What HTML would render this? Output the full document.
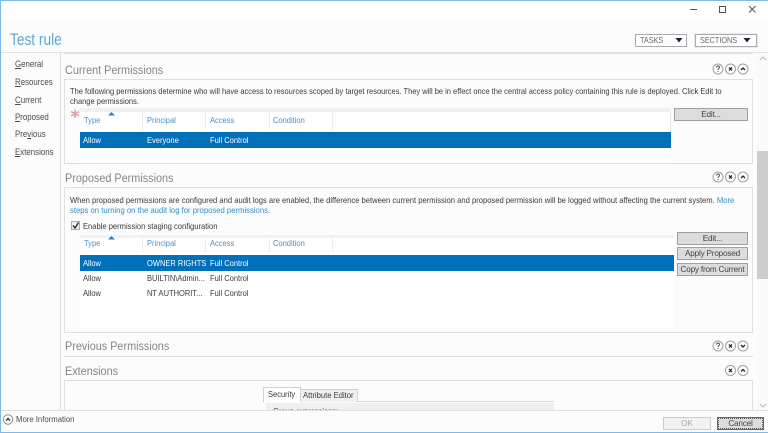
<!DOCTYPE html>
<html><head><meta charset="utf-8"><style>
html,body{margin:0;padding:0;width:768px;height:433px;overflow:hidden;background:#fcfcfc}
body{position:relative;font-family:"Liberation Sans",sans-serif;font-size:8.6px;color:#3a3a3a}
#w{position:absolute;left:0;top:0;width:768px;height:433px;overflow:hidden;filter:blur(.3px)}
.a,.th,.n,.h{transform:scaleX(.875);transform-origin:0 50%}
.a{position:absolute;white-space:nowrap;line-height:12px}
.b{position:absolute;box-sizing:border-box}
.h{position:absolute;white-space:nowrap;font-size:12.4px;color:#858585;line-height:16px;left:65px}
.n{position:absolute;left:14.500px;font-size:9px;color:#4a4a4a;line-height:12px}
.n u{text-decoration-thickness:1px}
.th{position:absolute;color:#4a90c8;line-height:12px;font-size:8.6px;white-space:nowrap}
.w{color:#fff}
.btn{position:absolute;box-sizing:border-box;background:#dcdcdc;border:1px solid #a0a0a0;text-align:center;font-size:8.2px;letter-spacing:-.2px;color:#444;line-height:11px;white-space:nowrap}
.sep{position:absolute;width:1px;background:#ececec}
svg{position:absolute;overflow:visible}
</style></head><body><div id="w">
<div class="b" style="left:0;top:0;width:768px;height:19px;background:#fff"></div>

<svg style="left:690px;top:0" width="78" height="19" fill="none" stroke="#555" stroke-width="1">
<path d="M0 9.500h7"/><rect x="29.500" y="6.500" width="6" height="6"/><path d="M59 6l6.500 6.500M65.500 6l-6.500 6.500"/></svg>

<div class="a" style="left:10px;top:29px;font-size:16.500px;line-height:22px;color:#62a6cf;transform:scaleX(.83)">Test rule</div>
<div class="b" style="left:635px;top:34px;width:52px;height:13px;background:#fff;border:1px solid #aaa"></div>
<div class="a" style="left:640px;top:35px;font-size:8.300px;line-height:11px;color:#666">TASKS</div>
<svg style="left:675px;top:38px" width="8" height="5"><path d="M0.500 0h7L4 4.500z" fill="#1f1f3a"/></svg>
<div class="b" style="left:695px;top:34px;width:62px;height:13px;background:#fff;border:1px solid #aaa;outline:1px solid #e6eef8"></div>
<div class="a" style="left:700px;top:35px;font-size:8.300px;line-height:11px;color:#666">SECTIONS</div>
<svg style="left:743px;top:38px" width="8" height="5"><path d="M0.500 0h7L4 4.500z" fill="#1f1f3a"/></svg>

<div class="b" style="left:1px;top:52px;width:767px;height:1px;background:#e2e2e2"></div>
<div class="b" style="left:60px;top:52px;width:1px;height:358px;background:#dcdcdc"></div>
<div class="b" style="left:64px;top:53px;width:689px;height:1px;background:#e2e2e2"></div>

<div class="n" style="top:58px"><u>G</u>eneral</div>
<div class="n" style="top:76px"><u>R</u>esources</div>
<div class="n" style="top:94px"><u>C</u>urrent</div>
<div class="n" style="top:111px"><u>P</u>roposed</div>
<div class="n" style="top:128px">Pre<u>v</u>ious</div>
<div class="n" style="top:146px"><u>E</u>xtensions</div>

<div class="b" style="left:757px;top:53px;width:11px;height:357px;background:#fafafa"></div>
<div class="b" style="left:757px;top:151px;width:11px;height:128px;background:#cdcdcd"></div>
<svg style="left:759px;top:56px" width="8" height="5" fill="none" stroke="#bbb"><path d="M1 4l3-3 3 3"/></svg>
<svg style="left:759px;top:403px" width="8" height="5" fill="none" stroke="#bbb"><path d="M1 1l3 3 3-3"/></svg>

<!-- Current -->
<div class="h" style="top:62px">Current Permissions</div>
<div class="b" style="left:64px;top:79px;width:689px;height:85px;border:1px solid #e0e0e0"></div>
<div class="a" style="left:70px;top:85px;transform:scaleX(.872)">The following permissions determine who will have access to resources scoped by target resources. They will be in effect once the central access policy containing this rule is deployed. Click Edit to</div>
<div class="a" style="left:70px;top:95px">change permissions.</div>
<div class="b" style="left:80px;top:108px;width:591px;height:4px;background:#f1f1f1"></div>
<div class="b" style="left:80px;top:112px;width:591px;height:51px;background:#fff"></div>
<div class="b" style="left:670px;top:112px;width:1px;height:20px;background:#e4e4e4"></div>
<svg style="left:70px;top:109px" width="10" height="10" fill="none" stroke="#e3a5ad" stroke-width="1.800"><path d="M5 0.500v8.500M1 2.500l8 4.500M9 2.500l-8 4.500"/></svg>
<svg style="left:108px;top:112px" width="7" height="4"><path d="M0 3.500L3.500 0 7 3.500z" fill="#2b7fc4"/></svg>
<div class="sep" style="left:142px;top:112px;height:18px"></div><div class="sep" style="left:205px;top:112px;height:18px"></div><div class="sep" style="left:269px;top:112px;height:18px"></div><div class="sep" style="left:332px;top:112px;height:18px"></div>
<div class="th" style="left:84px;top:114px">Type</div><div class="th" style="left:147px;top:114px">Principal</div><div class="th" style="left:210px;top:114px">Access</div><div class="th" style="left:273px;top:114px">Condition</div>
<div class="b" style="left:80px;top:132px;width:591px;height:16px;background:#0070bb"></div>
<div class="a w" style="left:83px;top:134px">Allow</div><div class="a w" style="left:146.500px;top:134px">Everyone</div><div class="a w" style="left:209.500px;top:134px">Full Control</div>
<div class="btn" style="left:674px;top:108px;width:74px;height:13px">Edit...</div>

<!-- Proposed -->
<div class="h" style="top:170px">Proposed Permissions</div>
<div class="b" style="left:64px;top:187px;width:689px;height:146px;border:1px solid #e0e0e0"></div>
<div class="a" style="left:70px;top:194px;transform:scaleX(.886)">When proposed permissions are configured and audit logs are enabled, the difference between current permission and proposed permission will be logged without affecting the current system. <span style="color:#2f8fc8">More</span></div>
<div class="a" style="left:70px;top:204px;color:#2f8fc8;transform:scaleX(.895)">steps on turning on the audit log for proposed permissions.</div>
<div class="b" style="left:71px;top:221px;width:9px;height:9px;background:#eee;border:1px solid #aaa"></div>
<svg style="left:71px;top:221px" width="10" height="10" fill="none" stroke="#222" stroke-width="1.300"><path d="M2 4.500l2 2.500 3.500-5.500"/></svg>
<div class="a" style="left:83px;top:220px;transform:scaleX(.882)">Enable permission staging configuration</div>
<div class="b" style="left:80px;top:235px;width:594px;height:92px;background:#fff;border-top:3px solid #f1f1f1"></div>
<svg style="left:108px;top:236px" width="7" height="4"><path d="M0 3.500L3.500 0 7 3.500z" fill="#2b7fc4"/></svg>
<div class="sep" style="left:142px;top:238px;height:14px"></div><div class="sep" style="left:205px;top:238px;height:14px"></div><div class="sep" style="left:269px;top:238px;height:14px"></div><div class="sep" style="left:332px;top:238px;height:14px"></div>
<div class="th" style="left:84px;top:237px">Type</div><div class="th" style="left:147px;top:237px">Principal</div><div class="th" style="left:210px;top:237px">Access</div><div class="th" style="left:273px;top:237px">Condition</div>
<div class="b" style="left:80px;top:255px;width:594px;height:16px;background:#0070bb"></div>
<div class="a w" style="left:83px;top:257px">Allow</div><div class="a w" style="left:146.500px;top:257px">OWNER RIGHTS</div><div class="a w" style="left:209.500px;top:257px">Full Control</div>
<div class="a" style="left:83px;top:272px">Allow</div><div class="a" style="left:146.500px;top:272px">BUILTIN\Admin...</div><div class="a" style="left:209.500px;top:272px">Full Control</div>
<div class="a" style="left:83px;top:287px">Allow</div><div class="a" style="left:146.500px;top:287px">NT AUTHORIT...</div><div class="a" style="left:209.500px;top:287px">Full Control</div>
<div class="btn" style="left:677px;top:232px;width:71px;height:13px">Edit...</div>
<div class="btn" style="left:677px;top:247px;width:71px;height:13px">Apply Proposed</div>
<div class="btn" style="left:677px;top:263px;width:71px;height:13px">Copy from Current</div>

<!-- Previous / Extensions -->
<div class="h" style="top:338px">Previous Permissions</div>
<div class="b" style="left:64px;top:356px;width:689px;height:1px;background:#ddd"></div>
<div class="h" style="top:363px">Extensions</div>
<div class="b" style="left:64px;top:380px;width:689px;height:31px;border:1px solid #e0e0e0;border-bottom:0"></div>
<div class="b" style="left:263px;top:401px;width:291px;height:1px;background:#d8d8d8"></div>
<div class="b" style="left:266px;top:403px;width:288px;height:7px;background:#f0f0f0"></div>
<div class="b" style="left:263px;top:387px;width:38px;height:15px;background:#fff;border:1px solid #d0d0d0;border-bottom:0"></div>
<div class="b" style="left:300px;top:389px;width:58px;height:13px;background:#f0f0f0;border:1px solid #d0d0d0;border-bottom:0"></div>
<div class="a" style="left:268px;top:388px">Security</div>
<div class="a" style="left:303px;top:389px;transform:scaleX(.89)">Attribute Editor</div>
<div class="a" style="left:273px;top:405px;height:5px;overflow:hidden;line-height:12px">Group expressions:</div>

<!-- section icons -->
<svg style="left:0;top:0" width="768" height="433" fill="none">
<g stroke="#a0a0a0" fill="#fff">
<circle cx="718" cy="69" r="5"/><circle cx="730.500" cy="69" r="5"/><circle cx="743" cy="69" r="5"/>
<circle cx="718" cy="177" r="5"/><circle cx="730.500" cy="177" r="5"/><circle cx="743" cy="177" r="5"/>
<circle cx="718" cy="346" r="5"/><circle cx="730.500" cy="346" r="5"/><circle cx="743" cy="346" r="5"/>
<circle cx="730.500" cy="370.500" r="5"/><circle cx="743" cy="370.500" r="5"/>
</g>
<g stroke="#222" stroke-width="1.300">
<path d="M729 67.500l3 3M732 67.500l-3 3M741 70l2-2 2 2"/>
<path d="M729 175.500l3 3M732 175.500l-3 3M741 178l2-2 2 2"/>
<path d="M729 344.500l3 3M732 344.500l-3 3M741 345l2 2 2-2"/>
<path d="M729 369l3 3M732 369l-3 3M741 371.500l2-2 2 2"/>
</g>
<g stroke="#444" stroke-width=".9">
<path d="M716.500 67.500c0-2 3-2 3 0 0 1-1.500 1-1.500 2.500M718 71v1"/>
<path d="M716.500 175.500c0-2 3-2 3 0 0 1-1.500 1-1.500 2.500M718 179v1"/>
<path d="M716.500 344.500c0-2 3-2 3 0 0 1-1.500 1-1.500 2.500M718 348v1"/>
</g></svg>

<!-- footer -->
<div class="b" style="left:1px;top:410px;width:767px;height:22px;background:#fcfcfc;border-top:1px solid #e0e0e0"></div>
<svg style="left:0;top:413px" width="14" height="14" fill="none"><circle cx="8" cy="6.500" r="4.700" stroke="#888" fill="#fff"/><path d="M6 7.500l2-2 2 2" stroke="#222" stroke-width="1.300"/></svg>
<div class="a" style="left:16px;top:413px;color:#4a4a4a;transform:scaleX(.9)">More Information</div>
<div class="btn" style="left:663px;top:417px;width:48px;height:13px;background:#f2f2f2;border-color:#ccc;color:#aaa">OK</div>
<div class="btn" style="left:717px;top:417px;width:47px;height:13px;border-color:#666;outline:1px dotted #555;outline-offset:-2px">Cancel</div>

<div class="b" style="left:0;top:0;width:768px;height:1px;background:#7db9ec"></div>
<div class="b" style="left:0;top:0;width:1px;height:433px;background:#7db9ec"></div>
<div class="b" style="left:0;top:432px;width:768px;height:1px;background:#7db9ec"></div>
</div></body></html>
